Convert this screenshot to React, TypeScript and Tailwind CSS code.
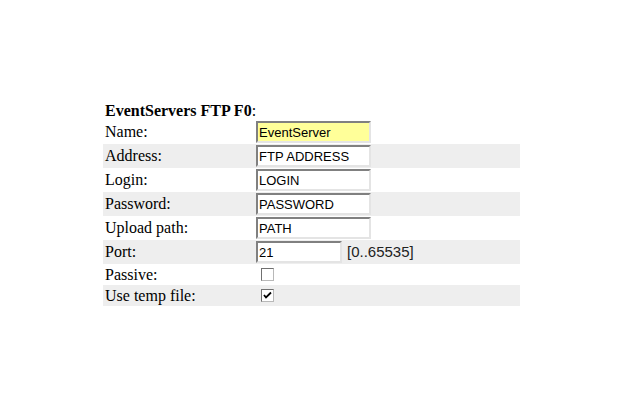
export default function App() {
  const rows: { label: string; kind: "text" | "port" | "check"; value?: string; checked?: boolean; yellow?: boolean }[] = [
    { label: "Name:", kind: "text", value: "EventServer", yellow: true },
    { label: "Address:", kind: "text", value: "FTP ADDRESS" },
    { label: "Login:", kind: "text", value: "LOGIN" },
    { label: "Password:", kind: "text", value: "PASSWORD" },
    { label: "Upload path:", kind: "text", value: "PATH" },
    { label: "Port:", kind: "port", value: "21" },
    { label: "Passive:", kind: "check", checked: false },
    { label: "Use temp file:", kind: "check", checked: true },
  ];

  const inputCls =
    "h-[22px] border-2 border-t-[#808080] border-l-[#808080] border-b-[#e4e4e4] border-r-[#e4e4e4] px-[1px] text-[13px] text-black outline-none font-['Liberation_Sans',Arial,sans-serif]";

  return (
    <div className="min-h-[400px] w-[640px] bg-white pt-[101px] pl-[103px] font-['Liberation_Serif','Times_New_Roman',serif] text-[16px] leading-[18px] text-black">
      <table className="w-[417px] border-collapse">
        <tbody>
          <tr className="h-[19px]">
            <td colSpan={2} className="px-[2px] align-middle">
              <b>EventServers FTP F0</b>:
            </td>
          </tr>
          {rows.map((r, i) => (
            <tr
              key={r.label}
              className={`${r.kind === "check" ? "h-[21px]" : "h-[24px]"} ${i % 2 === 1 ? "bg-[#eeeeee]" : ""}`}
            >
              <td className="w-[151px] px-[2px] align-middle">{r.label}</td>
              <td className="pl-[2px] align-middle">
                {r.kind === "text" && (
                  <input
                    readOnly
                    value={r.value}
                    className={`${inputCls} w-[115px] block ${r.yellow ? "bg-[#ffff99]" : "bg-white"}`}
                  />
                )}
                {r.kind === "port" && (
                  <div className="flex items-center">
                    <input readOnly value={r.value} className={`${inputCls} w-[86px] bg-white`} />
                    <span className="ml-[5px] text-[15px] text-[#222] font-['Liberation_Sans',Arial,sans-serif]">[0..65535]</span>
                  </div>
                )}
                {r.kind === "check" && (
                  <div className="ml-[5px] flex h-[13px] w-[13px] items-center justify-center border border-t-[#707070] border-l-[#707070] border-b-[#b8b8b8] border-r-[#b8b8b8] bg-white">
                    {r.checked && (
                      <svg width="9" height="9" viewBox="0 0 9 9">
                        <path d="M1 4 L3 6.5 L8 1.5" stroke="#000" strokeWidth="1.8" fill="none" />
                      </svg>
                    )}
                  </div>
                )}
              </td>
            </tr>
          ))}
        </tbody>
      </table>
    </div>
  );
}
